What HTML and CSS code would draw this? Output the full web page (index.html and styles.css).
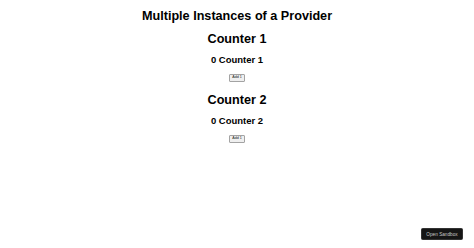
FILE: index.html
```html
<!DOCTYPE html>
<html lang="en">
<head>
<meta charset="utf-8">
<title>Multiple Instances of a Provider</title>
<link rel="stylesheet" href="styles.css">
</head>
<body>
<div class="app">
  <h1 class="title">Multiple Instances of a Provider</h1>
  <section class="counter">
    <h1 class="counter-name">Counter 1</h1>
    <h2 class="counter-value">0 Counter 1</h2>
    <button class="add-btn" type="button">Add 1</button>
  </section>
  <section class="counter">
    <h1 class="counter-name">Counter 2</h1>
    <h2 class="counter-value">0 Counter 2</h2>
    <button class="add-btn" type="button">Add 1</button>
  </section>
</div>
<a class="open-sandbox" href="#">Open Sandbox</a>
</body>
</html>
```
FILE: styles.css
```css
html, body {
  background: #ffffff;
}
body {
  margin: 0;
  font-family: "Liberation Sans", Arial, sans-serif;
  color: #000000;
}
.app {
  text-align: center;
  padding-top: 0.1px;
}
.title {
  font-size: 12.64px;
  font-weight: bold;
  line-height: 1.149;
  margin: 9px 0 8.4px;
}
.counter {
  padding-bottom: 2.8px;
}
.counter-name {
  font-size: 12.64px;
  font-weight: bold;
  line-height: 1.149;
  margin: 8.47px 0;
}
.counter-value {
  font-size: 9.48px;
  font-weight: bold;
  line-height: 1.149;
  margin: 7.87px 0;
}
.add-btn {
  display: block;
  font-family: "Liberation Sans", Arial, sans-serif;
  font-size: 3.7px;
  line-height: 1;
  padding: 1.2px 1.9px;
  margin: 0 auto;
  color: #222222;
  background: #efefef;
  border: 0.5px solid #a3a3a3;
  border-radius: 1px;
}
.open-sandbox {
  position: fixed;
  right: 11px;
  bottom: 8px;
  width: 42px;
  height: 12px;
  display: flex;
  align-items: center;
  justify-content: center;
  background: #151515;
  color: #c8c8c8;
  font-family: "Liberation Sans", Arial, sans-serif;
  font-size: 4.7px;
  text-decoration: none;
  border-radius: 1.5px;
  box-sizing: border-box;
  border: 0.5px solid #333333;
}
```
